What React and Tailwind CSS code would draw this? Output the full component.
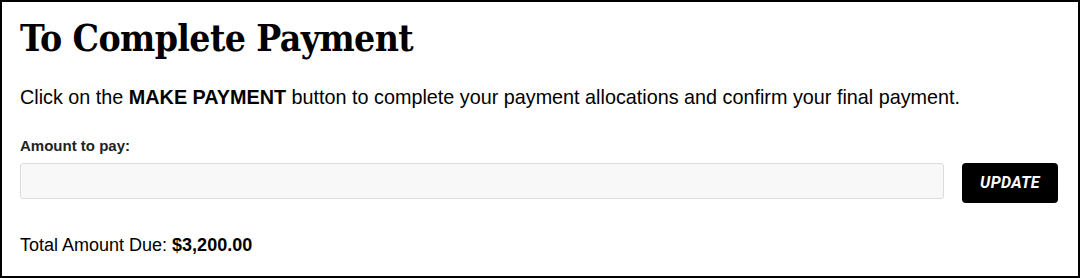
export default function App() {
  return (
    <div className="w-[1080px] h-[278px] border-2 border-black bg-white px-[18px] font-['Liberation_Sans',Arial,sans-serif] text-black">
      <h1 className="mt-[13px] font-['DejaVu_Serif_Condensed','DejaVu_Serif',serif] font-bold text-[37px] leading-[46px] tracking-[-0.6px]">
        To Complete Payment
      </h1>
      <p className="mt-[24px] text-[19.8px] leading-[24px]">
        Click on the <strong className="font-bold">MAKE PAYMENT</strong> button to complete your payment allocations and confirm your final payment.
      </p>
      <label className="block mt-[28px] text-[15px] font-bold leading-[18px] text-[#222]">Amount to pay:</label>
      <div className="mt-[8px] flex items-start gap-[18px]">
        <input
          type="text"
          className="w-[924px] h-[36px] rounded-[3px] border border-[#dcdcdc] bg-[#f8f8f8] outline-none"
        />
        <button className="w-[96px] h-[40px] rounded-[4px] bg-black text-white text-[16px] font-bold italic tracking-[0.3px] font-['Roboto',sans-serif]">
          UPDATE
        </button>
      </div>
      <p className="mt-[31px] text-[18px] leading-[22px]">
        Total Amount Due: <strong className="font-bold">$3,200.00</strong>
      </p>
    </div>
  );
}
